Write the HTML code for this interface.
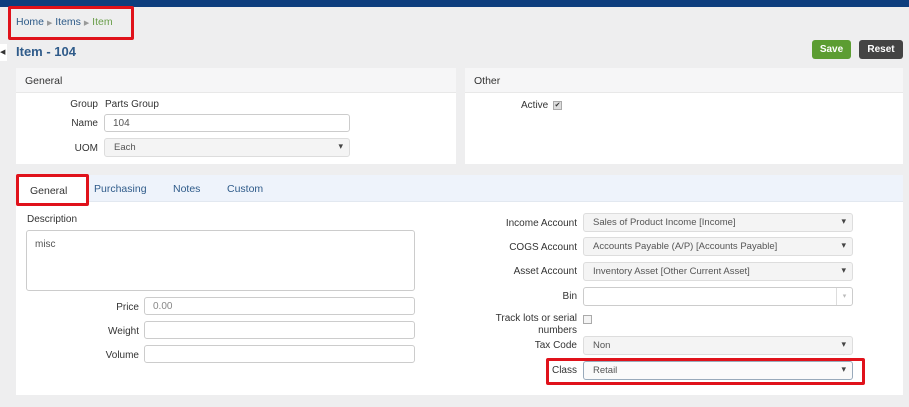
<!DOCTYPE html>
<html><head><style>
*{box-sizing:border-box;margin:0;padding:0}
body{width:909px;height:407px;overflow:hidden;background:#eeeeef;font-family:"Liberation Sans",sans-serif;font-size:10px;color:#333;position:relative}
.a{position:absolute}
.lbl{position:absolute;text-align:right;font-size:10px;color:#333}
.inp{position:absolute;background:#fff;border:1px solid #ccc;border-radius:3px;font-size:10px;color:#555;padding:3px 8px;height:18px}
.sel{position:absolute;background:#f4f4f4;border:1px solid #ddd;border-radius:3px;font-size:9.5px;color:#555;padding:3px 9px;height:19px}
.sel:after{content:"▾";position:absolute;right:6px;top:2px;font-size:9px;color:#444}
.red{position:absolute;border:3px solid #e0121b;border-radius:2px}
</style></head><body>
<div class="a" style="left:0;top:0;width:909px;height:7px;background:#0e3e7e"></div>
<div class="a" style="left:16px;top:16px;font-size:10.5px;color:#2d5a88">Home <span style="color:#999;font-size:7px">▶</span> Items <span style="color:#999;font-size:7px">▶</span> <span style="color:#6a9e4a">Item</span></div>
<div class="red" style="left:8px;top:6px;width:126px;height:34px"></div>
<div class="a" style="left:0;top:44px;width:7px;height:17px;background:#fff;font-size:7px;color:#333;line-height:17px">◀</div>
<div class="a" style="left:16px;top:44px;font-size:13px;font-weight:bold;color:#2f5b8a">Item - 104</div>
<div class="a" style="left:812px;top:40px;width:39px;height:19px;background:#5c9d32;border-radius:3px;color:#fff;font-weight:bold;font-size:10px;text-align:center;line-height:19px">Save</div>
<div class="a" style="left:859px;top:40px;width:44px;height:19px;background:#444;border-radius:3px;color:#fff;font-weight:bold;font-size:10px;text-align:center;line-height:19px">Reset</div>

<div class="a" style="left:16px;top:68px;width:440px;height:96px;background:#fff">
<div style="height:25px;background:#f6f6f7;border-bottom:1px solid #e8e8e8;padding:7px 9px;font-size:10.5px;color:#333">General</div></div>
<div class="lbl" style="left:40px;width:58px;top:99px">Group</div>
<div class="a" style="left:105px;top:99px">Parts Group</div>
<div class="lbl" style="left:40px;width:58px;top:118px">Name</div>
<div class="inp" style="left:104px;top:114px;width:246px">104</div>
<div class="lbl" style="left:40px;width:58px;top:143px">UOM</div>
<div class="sel" style="left:104px;top:138px;width:246px">Each</div>

<div class="a" style="left:465px;top:68px;width:438px;height:96px;background:#fff">
<div style="height:25px;background:#f6f6f7;border-bottom:1px solid #e8e8e8;padding:7px 9px;font-size:10.5px;color:#333">Other</div></div>
<div class="a" style="left:521px;top:100px">Active</div>
<div class="a" style="left:553px;top:101px;width:9px;height:9px;background:#ddd;border:1px solid #aaa;font-size:7px;line-height:7px;text-align:center">✔</div>

<div class="a" style="left:16px;top:175px;width:887px;height:220px;background:#fff"></div>
<div class="a" style="left:16px;top:175px;width:887px;height:27px;background:#eef3fb;border-bottom:1px solid #e2e8f0"></div>
<div class="a" style="left:18px;top:177px;width:70px;height:27px;background:#fff"></div>
<div class="a" style="left:30px;top:185px;font-size:10.5px;color:#333">General</div>
<div class="a" style="left:94px;top:183px;font-size:10.5px;color:#2f5b8a">Purchasing</div>
<div class="a" style="left:173px;top:183px;font-size:10.5px;color:#2f5b8a">Notes</div>
<div class="a" style="left:227px;top:183px;font-size:10.5px;color:#2f5b8a">Custom</div>
<div class="red" style="left:16px;top:174px;width:73px;height:32px"></div>

<div class="a" style="left:27px;top:214px">Description</div>
<div class="inp" style="left:26px;top:230px;width:389px;height:61px;padding:8px 8px">misc</div>
<div class="lbl" style="left:80px;width:59px;top:302px">Price</div>
<div class="inp" style="left:144px;top:297px;width:271px;color:#888">0.00</div>
<div class="lbl" style="left:80px;width:59px;top:326px">Weight</div>
<div class="inp" style="left:144px;top:321px;width:271px"></div>
<div class="lbl" style="left:80px;width:59px;top:350px">Volume</div>
<div class="inp" style="left:144px;top:345px;width:271px"></div>

<div class="lbl" style="left:470px;width:107px;top:218px">Income Account</div>
<div class="sel" style="left:583px;top:213px;width:270px">Sales of Product Income [Income]</div>
<div class="lbl" style="left:470px;width:107px;top:242px">COGS Account</div>
<div class="sel" style="left:583px;top:237px;width:270px">Accounts Payable (A/P) [Accounts Payable]</div>
<div class="lbl" style="left:470px;width:107px;top:266px">Asset Account</div>
<div class="sel" style="left:583px;top:262px;width:270px">Inventory Asset [Other Current Asset]</div>
<div class="lbl" style="left:470px;width:107px;top:291px">Bin</div>
<div class="inp" style="left:583px;top:287px;width:270px;height:19px"><span style="position:absolute;right:0;top:0;width:16px;height:17px;border-left:1px solid #ddd;color:#bbb;font-size:7px;text-align:center;line-height:17px">▾</span></div>
<div class="lbl" style="left:470px;width:107px;top:313px;line-height:12px">Track lots or serial<br>numbers</div>
<div class="a" style="left:583px;top:315px;width:9px;height:9px;border:1px solid #aaa;background:#f4f4f4"></div>
<div class="lbl" style="left:470px;width:107px;top:340px">Tax Code</div>
<div class="sel" style="left:583px;top:336px;width:270px">Non</div>
<div class="lbl" style="left:470px;width:107px;top:365px">Class</div>
<div class="sel" style="left:583px;top:361px;width:270px;background:#fafafa;border-color:#9ab">Retail</div>
<div class="red" style="left:546px;top:358px;width:319px;height:27px"></div>
</body></html>
